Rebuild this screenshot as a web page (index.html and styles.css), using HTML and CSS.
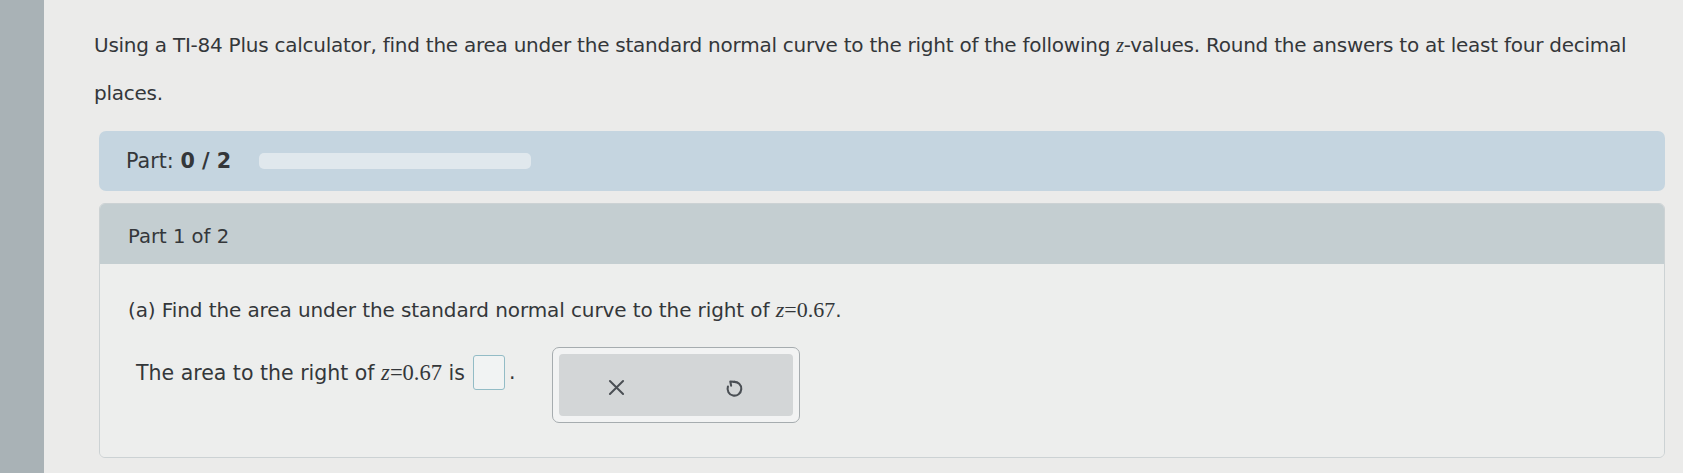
FILE: index.html
```html
<!DOCTYPE html>
<html lang="en">
<head>
<meta charset="utf-8">
<title>Part 1 of 2</title>
<link rel="stylesheet" href="styles.css">
</head>
<body>
<div class="page">
  <div class="strip"></div>
  <main class="main">
    <p class="question">Using a TI-84 Plus calculator, find the area under the standard normal curve to the right of the following <span class="var">z</span>-values. Round the answers to at least four decimal<br>places.</p>

    <div class="partbar">
      <span class="part-label">Part: <b>0 / 2</b></span>
      <div class="track"></div>
    </div>

    <section class="part">
      <div class="part-head">Part 1 of 2</div>
      <div class="part-body">
        <p class="qa">(a) Find the area under the standard normal curve to the right of <span class="math"><span class="mi">z</span>=0.67</span>.</p>
        <div class="answer-row">
          <span class="answer-text">The area to the right of <span class="math"><span class="mi">z</span>=0.67</span> is</span>
          <span class="box"></span>
          <span class="dot">.</span>
          <div class="tools">
            <div class="tools-inner">
              <svg class="icon" viewBox="0 0 16 16" width="21" height="21"><path d="M3 3 L13 13 M13 3 L3 13" stroke="#4a4f54" stroke-width="1.5" fill="none" stroke-linecap="round"/></svg>
              <svg class="icon" viewBox="0 0 16 16" width="22" height="22"><path d="M7.9 4.3 A5 5 0 1 1 3.6 7.6" stroke="#4a4f54" stroke-width="1.5" fill="none" stroke-linecap="round"/><path d="M8.4 4.2 L5.3 4.0 L5.9 7.0" stroke="#4a4f54" stroke-width="1.5" fill="none" stroke-linecap="round" stroke-linejoin="round"/></svg>
            </div>
          </div>
        </div>
      </div>
    </section>
  </main>
</div>
</body>
</html>
```

FILE: styles.css
```css
html, body {
  margin: 0;
  padding: 0;
}
body {
  width: 1683px;
  height: 473px;
  overflow: hidden;
  background: #ebebea;
  font-family: "DejaVu Sans", Verdana, sans-serif;
  color: #34373a;
}
.page {
  display: flex;
  height: 473px;
}
.strip {
  width: 44px;
  flex: none;
  background: #a9b2b6;
}
.main {
  flex: 1;
  padding: 21px 18px 0 50px;
  background: #ebebea;
}
.question {
  margin: 0 0 14px 0;
  font-size: 20px;
  letter-spacing: -0.25px;
  line-height: 48px;
  max-width: 1560px;
}
.var, .mi {
  font-family: "Liberation Serif", "Times New Roman", serif;
  font-style: italic;
}
.math {
  font-family: "Liberation Serif", "Times New Roman", serif;
  font-size: 1.1em;
  letter-spacing: 0;
}
.partbar {
  margin-left: 5px;
  height: 60px;
  background: #c5d5e0;
  border-radius: 7px;
  display: flex;
  align-items: center;
  padding-left: 27px;
  gap: 28px;
}
.part-label {
  font-size: 20.7px;
}
.part-label b {
  font-weight: bold;
}
.track {
  width: 272px;
  height: 16px;
  border-radius: 5px;
  background: #e0e8ed;
}
.part {
  margin: 12px 0 0 5px;
  border-radius: 6px;
  overflow: hidden;
  border: 1px solid #ccd2d4;
}
.part-head {
  height: 60px;
  background: #c4ced1;
  display: flex;
  align-items: center;
  padding: 4px 0 0 28px;
  box-sizing: border-box;
  font-size: 19.6px;
}
.part-body {
  background: #edeeed;
  height: 193px;
  padding: 32px 0 0 28px;
  box-sizing: border-box;
}
.qa {
  margin: 0;
  font-size: 20px;
  letter-spacing: -0.1px;
  line-height: 28px;
}
.answer-row {
  margin-top: 31px;
  display: flex;
  align-items: flex-start;
  padding-left: 8px;
  font-size: 20.5px;
  line-height: 35px;
}
.box {
  display: inline-block;
  width: 32px;
  height: 35px;
  box-sizing: border-box;
  margin-left: 8px;
  border: 1.5px solid #93bcc6;
  border-radius: 3px;
  background: #f1f3f3;
}
.dot {
  margin-left: 4px;
}
.tools {
  margin-left: 36px;
  margin-top: -8px;
  width: 248px;
  height: 76px;
  box-sizing: border-box;
  border: 1.5px solid #a6acaf;
  border-radius: 7px;
  background: #f2f3f3;
  padding: 6px;
}
.tools-inner {
  height: 100%;
  border-radius: 4px;
  background: #d3d6d7;
  display: flex;
  align-items: center;
  justify-content: space-around;
}
.icon {
  margin-top: 4px;
}
```
